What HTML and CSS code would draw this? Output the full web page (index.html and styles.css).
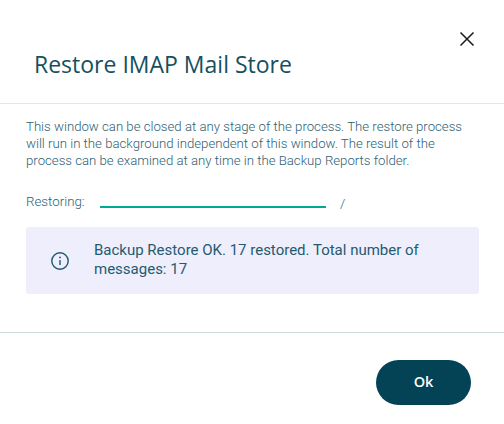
FILE: index.html
```
<!DOCTYPE html>
<html lang="en">
<head>
<meta charset="utf-8">
<title>Restore IMAP Mail Store</title>
<link rel="stylesheet" href="styles.css">
</head>
<body>
<div class="dialog">
  <header class="head">
    <h1 class="title">Restore IMAP Mail Store</h1>
    <button class="close" aria-label="Close">
      <svg width="16" height="16" viewBox="0 0 16 16"><path d="M1.5 1.5 14.5 14.5M14.5 1.5 1.5 14.5" stroke="#1a1a1a" stroke-width="1.5" fill="none"/></svg>
    </button>
  </header>
  <main class="body">
    <p class="intro">This window can be closed at any stage of the process. The restore process will run in the background independent of this window. The result of the process can be examined at any time in the Backup Reports folder.</p>
    <div class="progress">
      <span class="label">Restoring:</span>
      <span class="bar"></span>
      <span class="slash">/</span>
    </div>
    <div class="notice">
      <svg class="info" width="20" height="20" viewBox="0 0 20 20"><circle cx="10" cy="10" r="8.2" fill="none" stroke="#1d5870" stroke-width="1.4"/><path d="M10 9v5" stroke="#1d5870" stroke-width="1.4"/><circle cx="10" cy="6.4" r=".9" fill="#1d5870"/></svg>
      <span class="msg">Backup Restore OK. 17 restored. Total number of messages: 17</span>
    </div>
  </main>
  <footer class="foot">
    <button class="ok">Ok</button>
  </footer>
</div>
</body>
</html>
```
FILE: styles.css
```
* { box-sizing: border-box; }
html, body { margin: 0; padding: 0; background: #fff; }
body { width: 504px; height: 424px; overflow: hidden; font-family: Roboto, sans-serif; }
.dialog { display: flex; flex-direction: column; height: 424px; }
.head { height: 104px; padding: 30px 29px 0 34px; display: flex; justify-content: space-between; align-items: flex-start; border-bottom: 1px solid #dfe8e8; position: relative; }
.title { margin: 18px 0 0; font: 400 23px/32px "Open Sans", sans-serif; color: #16505f; }
.close { border: 0; background: none; padding: 0; width: 16px; height: 16px; display: block; margin-top: 1px; }
.close svg { display: block; }
.body { padding: 14px 25px 0 26px; height: 229px; border-bottom: 1px solid #c9dedd; }
.intro { margin: 0; font-size: 13.2px; line-height: 17px; font-weight: 300; color: #2d6173; }
.progress { display: flex; align-items: center; margin-top: 24px; height: 16px; font-size: 13.3px; font-weight: 300; color: #2d6173; }
.label { width: 74px; }
.bar { width: 226px; height: 2px; background: #00a896; margin-top: 11px; }
.slash { margin-left: 14px; margin-top: 5px; }
.notice { margin-top: 18px; height: 67px; background: #eeeefc; border-radius: 3px; display: flex; align-items: center; padding: 0 24px; gap: 24px; }
.info { flex: none; }
.msg { font-size: 15px; line-height: 19px; color: #255a70; padding-bottom: 2px; }
.foot { flex: 1; display: flex; justify-content: flex-end; padding: 27px 33px 0 0; }
.ok { width: 95px; height: 45px; padding: 0 0 3px; border: 0; border-radius: 23px; background: #034355; color: #fff; font: 600 14.5px "Open Sans", sans-serif; }
```
